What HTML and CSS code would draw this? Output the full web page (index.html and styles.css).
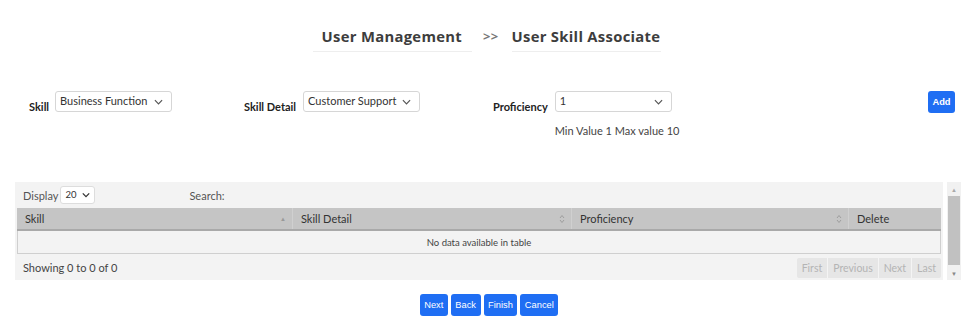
FILE: index.html
```html
<!DOCTYPE html>
<html>
<head>
<meta charset="utf-8">
<link rel="stylesheet" href="styles.css">
</head>
<body>
<div class="page">
  <div class="crumbs">
    <span class="crumb">User Management</span>
    <span class="sep">&gt;&gt;</span>
    <span class="crumb crumb2">User Skill Associate</span>
  </div>

  <div class="form-row">
    <div class="group g1">
      <label class="lbl">Skill</label>
      <div class="sel w116"><span>Business Function</span><svg class="chev" viewBox="0 0 10 6"><path d="M1 1l4 4 4-4" fill="none" stroke="#555" stroke-width="1.3"/></svg></div>
    </div>
    <div class="group g2">
      <label class="lbl">Skill Detail</label>
      <div class="sel w116"><span>Customer Support</span><svg class="chev" viewBox="0 0 10 6"><path d="M1 1l4 4 4-4" fill="none" stroke="#555" stroke-width="1.3"/></svg></div>
    </div>
    <div class="group g3">
      <label class="lbl">Proficiency</label>
      <div class="col">
        <div class="sel w116"><span>1</span><svg class="chev" viewBox="0 0 10 6"><path d="M1 1l4 4 4-4" fill="none" stroke="#555" stroke-width="1.3"/></svg></div>
        <div class="hint">Min Value 1 Max value 10</div>
      </div>
    </div>
    <button class="btn add">Add</button>
  </div>

  <div class="table-area">
    <div class="table-box">
      <div class="toolbar">
        <span class="disp">Display</span>
        <div class="sel small"><span>20</span><svg class="chev" viewBox="0 0 10 6"><path d="M1 1l4 4 4-4" fill="none" stroke="#333" stroke-width="1.6"/></svg></div>
        <span class="search">Search:</span>
      </div>
      <div class="thead">
        <div class="th c1">Skill<span class="sort up">&#9650;</span></div>
        <div class="th c2">Skill Detail<svg class="sort2" viewBox="0 0 6 10"><path d="M1 4l2-2.5L5 4M1 6l2 2.5L5 6" fill="none" stroke="#999" stroke-width="0.9"/></svg></div>
        <div class="th c3">Proficiency<svg class="sort2" viewBox="0 0 6 10"><path d="M1 4l2-2.5L5 4M1 6l2 2.5L5 6" fill="none" stroke="#999" stroke-width="0.9"/></svg></div>
        <div class="th c4">Delete</div>
      </div>
      <div class="empty">No data available in table</div>
      <div class="tfoot">
        <span class="info">Showing 0 to 0 of 0</span>
        <div class="pager">
          <span class="pg">First</span><span class="pg">Previous</span><span class="pg">Next</span><span class="pg">Last</span>
        </div>
      </div>
    </div>
    <div class="scrollbar">
      <span class="arr">&#9650;</span>
      <div class="thumb"></div>
      <span class="arr">&#9660;</span>
    </div>
  </div>

  <div class="actions">
    <button class="btn">Next</button>
    <button class="btn">Back</button>
    <button class="btn">Finish</button>
    <button class="btn">Cancel</button>
  </div>
</div>
</body>
</html>
```

FILE: styles.css
```css
* { box-sizing: border-box; }
html, body { margin: 0; padding: 0; background: #fff; }
body { font-family: Lato, "Open Sans", sans-serif; color: #333; width: 976px; height: 327px; overflow: hidden; }

.page { display: flex; flex-direction: column; }

.crumbs {
  display: flex; justify-content: center; align-items: center;
  margin-top: 25px; height: 27px; padding-right: 2px;
  font-family: "Open Sans", sans-serif; font-weight: 700; font-size: 14.8px; color: #3d3d3d;
  letter-spacing: 0.3px;
}
.crumb { padding: 0 10px 5px 9px; border-bottom: 1px solid #eee; }
.crumb2 { padding: 0 1px 5px 0; }
.sep { color: #777; font-size: 13px; margin: 0 13px 5px 11px; font-weight: 700; }

.form-row { display: flex; margin-top: 39px; padding: 0 21px 0 29px; height: 90px; }
.group { display: flex; align-items: flex-start; }
.g1 { width: 215px; }
.g2 { width: 249px; }
.lbl { font-weight: 700; font-size: 11px; color: #222; margin-top: 9px; margin-right: 6px; }
.g2 .lbl { margin-right: 7px; }
.g3 .lbl { margin-right: 7px; }
.col { display: flex; flex-direction: column; }

.sel {
  display: flex; align-items: center; justify-content: space-between;
  height: 21px; border: 1px solid #d6d6d6; border-radius: 3px; background: #fff;
  padding: 0 8px 0 4px; font-size: 11px; color: #333;
}
.sel span { padding-bottom: 2px; }
.w116 { width: 117px; }
.chev { width: 9px; height: 6px; }
.hint { font-size: 11px; color: #444; margin-top: 12px; }

.btn {
  background: #1f6ef3; color: #fff; border: none; border-radius: 3px;
  font-family: "Liberation Sans", Arial, sans-serif; font-size: 9.3px;
  height: 21px; padding: 0 4.5px; cursor: pointer;
}
.add { margin-left: auto; width: 27px; height: 22px; padding: 0; font-weight: 700; }

.table-area { display: flex; margin-top: 1px; padding-left: 15px; height: 98px; }
.table-box { width: 928px; background: #f3f3f3; padding: 0 2px 0 2px; display: flex; flex-direction: column; }
.toolbar { display: flex; align-items: center; height: 26px; padding-left: 6px; font-size: 11px; color: #555; }
.disp { margin-right: 2px; }
.sel.small { width: 35px; height: 18px; padding: 0 4px 0 4px; font-size: 9.5px; border-color: #ddd; }
.sel.small .chev { width: 8px; }
.search { margin-left: 94px; }

.thead { display: flex; height: 23px; background: #c5c5c5; border-bottom: 2px solid #a9a9a9; }
.th { display: flex; align-items: center; justify-content: space-between; font-size: 11px; color: #333; padding: 0 6px 0 8px; border-right: 1px solid #d0d0d0; }
.th:last-child { border-right: none; }
.c1 { width: 276px; }
.c2 { width: 279px; }
.c3 { width: 277px; }
.c4 { flex: 1; }
.sort.up { font-size: 6px; color: #999; }
.sort2 { width: 6px; height: 10px; }

.empty { height: 23px; display: flex; align-items: center; justify-content: center; font-size: 9.5px; color: #444; background: #f3f3f3; border: 1px solid #cfcfcf; border-top: none; }

.tfoot { display: flex; align-items: center; justify-content: space-between; flex: 1; padding-left: 6px; font-size: 11px; color: #444; }
.pager { display: flex; background: #e6e6e6; border-radius: 2px; height: 20px; margin-right: 0; margin-top: 2px; }
.pg { padding: 0 5px; font-size: 10.5px; color: #b4b4b4; display: flex; align-items: center; border-right: 1px solid #f4f4f4; }
.pg:last-child { border-right: none; }

.scrollbar { width: 14px; margin-left: 4px; background: #f1f1f1; display: flex; flex-direction: column; align-items: center; }
.arr { font-size: 6px; color: #888; height: 14px; display: flex; align-items: center; }
.arr:first-child { color: #aaa; }
.thumb { width: 12px; flex: 1; background: #c1c1c1; margin: 0 0 1px 0; }

.actions { display: flex; justify-content: center; gap: 3px; margin-top: 14px; padding-left: 2px; }
.actions .btn { height: 22px; }
```
